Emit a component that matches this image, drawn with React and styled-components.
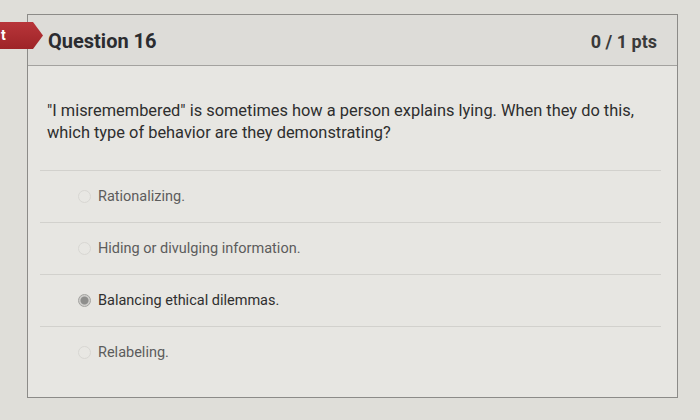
import React from 'react'
import styled, { createGlobalStyle } from 'styled-components'

const GlobalStyle = createGlobalStyle`
  html, body {
    margin: 0;
    padding: 0;
    background: #dfded9;
  }
  body {
    font-family: Roboto, "Liberation Sans", sans-serif;
    color: #2d2d2d;
  }
`

const Page = styled.div`
  position: relative;
  width: 700px;
  height: 420px;
  box-sizing: border-box;
  padding: 14px 22px 0 27px;
  overflow: hidden;
`

const Flag = styled.div`
  position: absolute;
  left: 0;
  top: 22px;
  width: 43px;
  height: 27px;
  background: linear-gradient(#b8353a, #9e2427);
  clip-path: polygon(0 0, 33px 0, 43px 50%, 33px 100%, 0 100%);
  color: #fff;
  font-size: 14px;
  font-weight: 700;
  line-height: 27px;
  padding-left: 1px;
  box-sizing: border-box;
`

const Card = styled.section`
  height: 384px;
  box-sizing: border-box;
  border: 1px solid #8c8b88;
  background: #e7e6e2;
  display: flex;
  flex-direction: column;
`

const Header = styled.header`
  height: 51px;
  flex: none;
  box-sizing: border-box;
  display: flex;
  align-items: center;
  justify-content: space-between;
  padding: 2px 20px 0 20px;
  background: #dddcd8;
  border-bottom: 1px solid #a3a29f;
`

const Title = styled.h2`
  margin: 0;
  font-size: 20px;
  font-weight: 700;
  color: #2b2c30;
`

const Points = styled.span`
  font-size: 18px;
  font-weight: 700;
  color: #3a3a3a;
`

const Body = styled.div`
  padding: 34px 16px 0 12px;
`

const Prompt = styled.p`
  margin: 0 0 26px 7px;
  max-width: 600px;
  font-size: 16.4px;
  line-height: 22px;
  color: #2e2e2e;
`

const Answers = styled.div`
  border-top: 1px solid #d2d1cd;
`

const Answer = styled.label`
  height: 52px;
  box-sizing: border-box;
  display: flex;
  align-items: center;
  gap: 7px;
  padding-left: 38px;
  border-bottom: 1px solid ${p => (p.$last ? 'transparent' : '#d2d1cd')};
  font-size: 14.5px;
  color: ${p => (p.$picked ? '#2f2f2f' : '#5c5c5c')};
`

const Radio = styled.span`
  width: 13px;
  height: 13px;
  border-radius: 50%;
  box-sizing: border-box;
  flex: none;
  border: 1px solid ${p => (p.$picked ? '#a3a3a0' : '#d8d7d3')};
  background: ${p => (p.$picked ? 'radial-gradient(circle, #8e8e8c 0 3.5px, #cfcecb 4.5px)' : '#e8e7e3')};
`

const answers = [
  'Rationalizing.',
  'Hiding or divulging information.',
  'Balancing ethical dilemmas.',
  'Relabeling.',
]

export default function App() {
  const picked = 2
  return (
    <Page>
      <GlobalStyle />
      <Flag>t</Flag>
      <Card>
        <Header>
          <Title>Question 16</Title>
          <Points>0 / 1 pts</Points>
        </Header>
        <Body>
          <Prompt>
            "I misremembered" is sometimes how a person explains lying. When they do this,
            which type of behavior are they demonstrating?
          </Prompt>
          <Answers>
            {answers.map((a, i) => (
              <Answer key={a} $picked={i === picked} $last={i === answers.length - 1}>
                <Radio $picked={i === picked} />
                {a}
              </Answer>
            ))}
          </Answers>
        </Body>
      </Card>
    </Page>
  )
}
